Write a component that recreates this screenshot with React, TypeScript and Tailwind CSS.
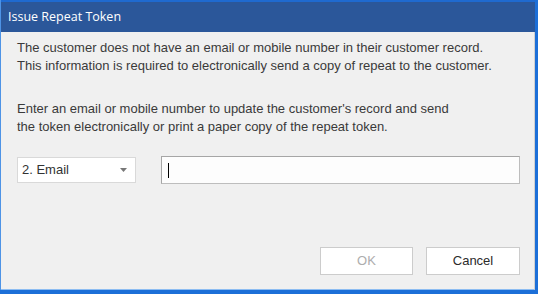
import React from "react";

export default function App() {
  return (
    <div className="w-[538px] h-[294px] bg-[#1c6fd8] relative overflow-hidden" style={{ fontFamily: '"Liberation Sans", Arial, sans-serif' }}>
      <div className="w-[535px] h-[290px] flex flex-col border-l border-[#4d93e6] bg-[#f0f0f0]">
        <div className="h-[32px] shrink-0 bg-[#2b579a] border-t-2 border-[#1f6ad0] flex items-center pl-[7px]">
          <span className="text-white text-[12.5px] leading-none" style={{ fontFamily: '"Open Sans", "Noto Sans", sans-serif' }}>Issue Repeat Token</span>
        </div>
        <div className="flex-1 flex flex-col border-b border-[#8dbdf2] border-r border-r-[#d0d0d0] pl-[16px] pr-[14px] pt-[7px] text-[13px] leading-[18px] text-[#3a3a3a]">
          <p>The customer does not have an email or mobile number in their customer record.<br />This information is required to electronically send a copy of repeat to the customer.</p>
          <p className="mt-[25px]">Enter an email or mobile number to update the customer's record and send<br />the token electronically or print a paper copy of the repeat token.</p>
          <div className="mt-[20px] flex items-center">
            <div className="w-[119px] h-[26px] bg-white border border-[#d9d9d9] flex items-center justify-between pl-[4px] pr-[8px]">
              <span className="text-[#333]">2. Email</span>
              <svg width="7" height="4" viewBox="0 0 7 4"><path d="M0 0 L7 0 L3.5 4 Z" fill="#777" /></svg>
            </div>
            <div className="ml-[25px] w-[360px] h-[28px] bg-[#fdfdfd] border border-t-[#a6a6a6] border-l-[#a6a6a6] border-r-[#bdbdbd] border-b-[#bdbdbd] flex items-center pl-[6px]">
              <div className="w-[1.5px] h-[15px] bg-black" />
            </div>
          </div>
          <div className="mt-auto mb-[14px] flex justify-end gap-[13px]">
            <div className="w-[93px] h-[28px] bg-white border border-[#cccccc] flex items-center justify-center text-[#adadad]">OK</div>
            <div className="w-[94px] h-[28px] bg-white border border-[#cccccc] flex items-center justify-center text-[#2b2b2b]">Cancel</div>
          </div>
        </div>
      </div>
    </div>
  );
}
